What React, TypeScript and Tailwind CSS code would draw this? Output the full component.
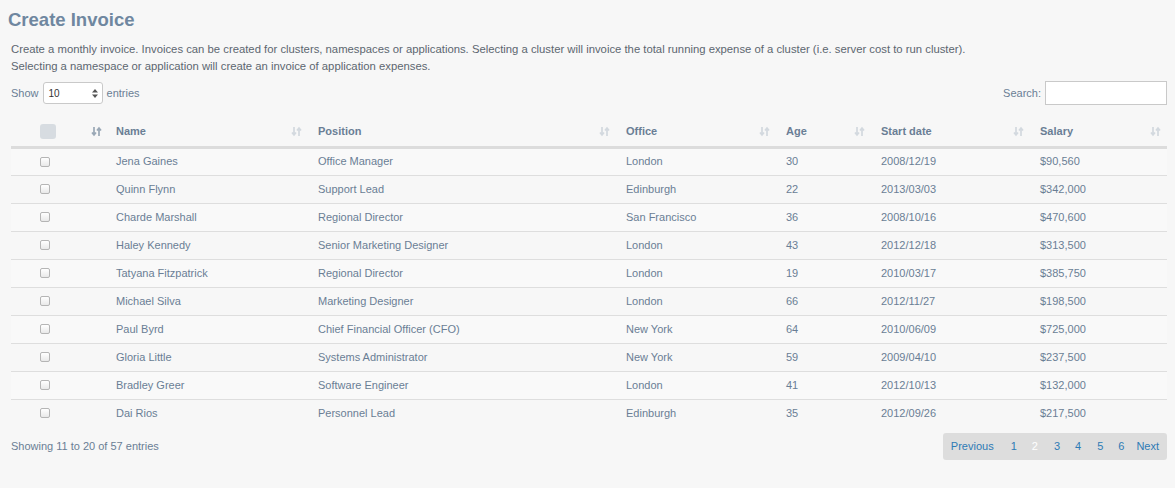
import React from 'react';

const rows = [
  ['Jena Gaines', 'Office Manager', 'London', '30', '2008/12/19', '$90,560'],
  ['Quinn Flynn', 'Support Lead', 'Edinburgh', '22', '2013/03/03', '$342,000'],
  ['Charde Marshall', 'Regional Director', 'San Francisco', '36', '2008/10/16', '$470,600'],
  ['Haley Kennedy', 'Senior Marketing Designer', 'London', '43', '2012/12/18', '$313,500'],
  ['Tatyana Fitzpatrick', 'Regional Director', 'London', '19', '2010/03/17', '$385,750'],
  ['Michael Silva', 'Marketing Designer', 'London', '66', '2012/11/27', '$198,500'],
  ['Paul Byrd', 'Chief Financial Officer (CFO)', 'New York', '64', '2010/06/09', '$725,000'],
  ['Gloria Little', 'Systems Administrator', 'New York', '59', '2009/04/10', '$237,500'],
  ['Bradley Greer', 'Software Engineer', 'London', '41', '2012/10/13', '$132,000'],
  ['Dai Rios', 'Personnel Lead', 'Edinburgh', '35', '2012/09/26', '$217,500'],
];

const SortIcon = ({ active }: { active?: boolean }) => (
  <svg width="11" height="11" viewBox="0 0 11 11" className="shrink-0">
    <g stroke={active ? '#9aa8b6' : '#d3d9df'} strokeWidth="1.7" fill="none">
      <path d="M3 1v8M1 6.5l2 2.5 2-2.5" />
      <path d="M8 10V2M6 4.5l2-2.5 2 2.5" />
    </g>
  </svg>
);

const headers = [
  { label: 'Name', w: 'w-[202px]' },
  { label: 'Position', w: 'w-[308px]' },
  { label: 'Office', w: 'w-[160px]' },
  { label: 'Age', w: 'w-[95px]' },
  { label: 'Start date', w: 'w-[159px]' },
  { label: 'Salary', w: 'w-[137px]' },
];

export default function App() {
  return (
    <div className="w-[1175px] h-[488px] bg-[#f7f7f7] pl-[11px] pr-[8px] pt-[9px] text-[11px] text-[#6a7e95] font-['Liberation_Sans',Arial,sans-serif] overflow-hidden">
      <h1 className="text-[18.5px] font-bold text-[#6f87a0] leading-[22px] -ml-[3px]">Create Invoice</h1>
      <p className="mt-[10px] leading-[17px] text-[11.3px] text-[#5c6670]">
        Create a monthly invoice. Invoices can be created for clusters, namespaces or applications. Selecting a cluster will invoice the total running expense of a cluster (i.e. server cost to run cluster).
        <br />
        Selecting a namespace or application will create an invoice of application expenses.
      </p>
      <div className="mt-[6px] flex items-center justify-between h-[24px]">
        <div className="flex items-center gap-[4px]">
          <span>Show</span>
          <div className="w-[60px] h-[22px] bg-white border border-[#c9c9c9] rounded-[3px] flex items-center justify-between pl-[5px] pr-[4px] text-[10px] text-[#333]">
            <span>10</span>
            <svg width="6" height="9" viewBox="0 0 6 9"><path d="M0 3.5L3 0l3 3.5zM0 5.5L3 9l3-3.5z" fill="#555" /></svg>
          </div>
          <span>entries</span>
        </div>
        <div className="flex items-center gap-[4px]">
          <span>Search:</span>
          <div className="w-[122px] h-[24px] bg-white border border-[#c9c9c9]" />
        </div>
      </div>
      <table className="mt-[12px] w-[1156px] border-collapse table-fixed">
        <thead>
          <tr className="h-[30px] border-b-[3px] border-[#dcdcdc]">
            <th className="w-[95px] p-0">
              <div className="flex items-center pl-[29px] pr-[4px]">
                <div className="w-[16px] h-[15px] rounded-[3px] bg-[#d7dce1]" />
                <div className="ml-auto"><SortIcon active /></div>
              </div>
            </th>
            {headers.map((h) => (
              <th key={h.label} className={`${h.w} p-0 text-left font-bold text-[#6a7e95]`}>
                <div className="flex items-center pl-[10px] pr-[6px]">
                  <span>{h.label}</span>
                  <div className="ml-auto"><SortIcon /></div>
                </div>
              </th>
            ))}
          </tr>
        </thead>
        <tbody>
          {rows.map((r, i) => (
            <tr key={i} className={`h-[28px] ${i < rows.length - 1 ? 'border-b border-[#dedede]' : ''} ${i % 2 === 0 ? 'bg-[#f9f9f9]' : 'bg-[#f7f7f7]'}`}>
              <td className="p-0">
                <div className="ml-[29px] w-[10px] h-[10px] rounded-[2px] border border-[#b5b5b5] bg-gradient-to-b from-white to-[#e9e9e9]" />
              </td>
              {r.map((c, j) => (
                <td key={j} className="p-0 pl-[10px]">{c}</td>
              ))}
            </tr>
          ))}
        </tbody>
      </table>
      <div className="mt-[5px] flex items-center justify-between h-[28px]">
        <span>Showing 11 to 20 of 57 entries</span>
        <div className="flex items-center h-[27px] bg-[#dddddd] rounded-[3px] pl-[8px] pr-[8px] text-[11px] text-[#2e7bb5]">
          <span>Previous</span>
          <span className="ml-[17px]">1</span>
          <span className="ml-[15px] text-white">2</span>
          <span className="ml-[16px]">3</span>
          <span className="ml-[15px]">4</span>
          <span className="ml-[16px]">5</span>
          <span className="ml-[15px]">6</span>
          <span className="ml-[12px]">Next</span>
        </div>
      </div>
    </div>
  );
}
